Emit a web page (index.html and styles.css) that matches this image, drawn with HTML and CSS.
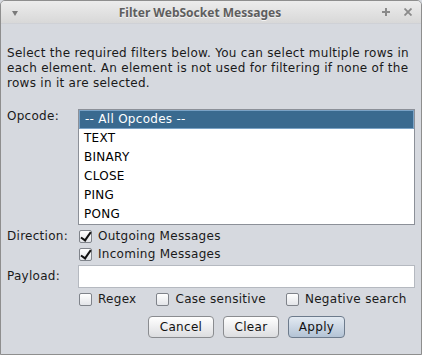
FILE: index.html
```html
<!DOCTYPE html>
<html lang="en">
<head>
  <meta charset="UTF-8" />
  <title>Filter WebSocket Messages</title>
  <link rel="stylesheet" href="styles.css">
</head>
<body>
  <div class="window">
    <div class="titlebar">
      <span class="menu-arrow"></span>
      <span class="title">Filter WebSocket Messages</span>
      <span class="win-btns">
        <svg width="8" height="8" viewBox="0 0 8 8"><path d="M4 0v8M0 4h8" stroke="#8a8a8a" stroke-width="2"/></svg>
        <svg width="8" height="8" viewBox="0 0 8 8"><path d="M0.5 0.5l7 7M7.5 0.5l-7 7" stroke="#8a8a8a" stroke-width="1.8"/></svg>
      </span>
    </div>

    <div class="content">
      <p class="intro">Select the required filters below. You can select multiple rows in each element. An element is not used for filtering if none of the rows in it are selected.</p>

      <div class="form">
        <label class="lbl">Opcode:</label>
        <ul class="list">
          <li class="selected">-- All Opcodes --</li>
          <li>TEXT</li>
          <li>BINARY</li>
          <li>CLOSE</li>
          <li>PING</li>
          <li>PONG</li>
        </ul>

        <label class="lbl lbl-small">Direction:</label>
        <div class="checks">
          <div class="check"><span class="box checked"></span>Outgoing Messages</div>
          <div class="check"><span class="box checked"></span>Incoming Messages</div>
        </div>

        <label class="lbl lbl-field">Payload:</label>
        <input class="field" type="text" />

        <span></span>
        <div class="options">
          <div class="check"><span class="box"></span>Regex</div>
          <div class="check"><span class="box"></span>Case sensitive</div>
          <div class="check"><span class="box"></span>Negative search</div>
        </div>

        <span></span>
        <div class="buttons">
          <button class="btn btn-cancel">Cancel</button>
          <button class="btn btn-clear">Clear</button>
          <button class="btn btn-apply">Apply</button>
        </div>
      </div>
    </div>
  </div>
</body>
</html>
```

FILE: styles.css
```css
* {
  margin: 0;
  padding: 0;
  box-sizing: border-box;
}
body {
  font-family: 'DejaVu Sans', sans-serif;
  font-size: 12px;
  letter-spacing: 0.28px;
  color: #1a1a1a;
  background: #d6d9df;
}
.window {
  width: 422px;
  height: 355px;
  border: 1px solid #8e8e8e;
  border-radius: 5px 5px 0 0;
  background: #d6d9df;
  overflow: hidden;
}
.titlebar {
  height: 23px;
  display: flex;
  align-items: center;
  padding: 0 9px 0 11px;
  background: linear-gradient(#ececec, #d8d8d8);
  border-bottom: 1px solid #cfd1d6;
}
.menu-arrow {
  width: 0;
  height: 0;
  border-left: 3px solid transparent;
  border-right: 3px solid transparent;
  border-top: 5px solid #7a7a7a;
  margin-top: 2px;
}
.title {
  flex: 1;
  text-align: center;
  font-family: 'Noto Sans', sans-serif;
  font-weight: bold;
  font-size: 12px;
  letter-spacing: 0;
  color: #5e5e5e;
  text-shadow: 0 1px 0 #f4f4f4;
}
.win-btns {
  display: flex;
  gap: 14px;
  align-items: center;
}
.win-btns svg {
  display: block;
}
.content {
  padding: 22px 6px 0 6px;
}
.intro {
  line-height: 15px;
  margin-bottom: 18px;
}
.form {
  display: grid;
  grid-template-columns: 71px 1fr;
  row-gap: 2px;
}
.lbl {
  line-height: 15px;
}
.lbl-small {
  line-height: 18px;
}
.lbl-field {
  line-height: 23px;
}
.list {
  list-style: none;
  background: white;
  border: 1px solid #8c9098;
  color: #000;
}
.list li {
  height: 19px;
  line-height: 19px;
  padding-left: 5px;
}
.list li.selected {
  background: #3a6a8f;
  border: 1px solid #7ba3c6;
  color: white;
  line-height: 17px;
  padding-left: 5px;
}
.checks {
  display: flex;
  flex-direction: column;
}
.check {
  display: flex;
  align-items: center;
  height: 18px;
  white-space: nowrap;
}
.box {
  width: 13px;
  height: 13px;
  margin-left: 1px;
  margin-right: 6px;
  border: 1px solid #7f838a;
  border-radius: 2px;
  background: linear-gradient(#ffffff, #e3e5e9);
  position: relative;
}
.box.checked::after {
  content: '';
  position: absolute;
  left: 3px;
  top: -1px;
  width: 4px;
  height: 9px;
  border-right: 2px solid #111;
  border-bottom: 2px solid #111;
  transform: rotate(35deg);
}
.field {
  height: 23px;
  border: 1px solid #b5b9c0;
  background: white;
  font: inherit;
}
.options {
  display: flex;
  gap: 19px;
}
.buttons {
  display: flex;
  justify-content: center;
  gap: 9px;
  margin-top: 6px;
}
.btn {
  height: 22px;
  font-family: 'DejaVu Sans', sans-serif;
  font-size: 12px;
  letter-spacing: 0.28px;
  color: #111;
  border: 1px solid #8a8c90;
  border-radius: 4px;
  background: linear-gradient(#ffffff, #dcdde0);
}
.btn-cancel {
  width: 66px;
}
.btn-clear {
  width: 56px;
}
.btn-apply {
  width: 57px;
  border-color: #6d7b8c;
  background: linear-gradient(#e3eaf2, #b3c3d5);
}
```
